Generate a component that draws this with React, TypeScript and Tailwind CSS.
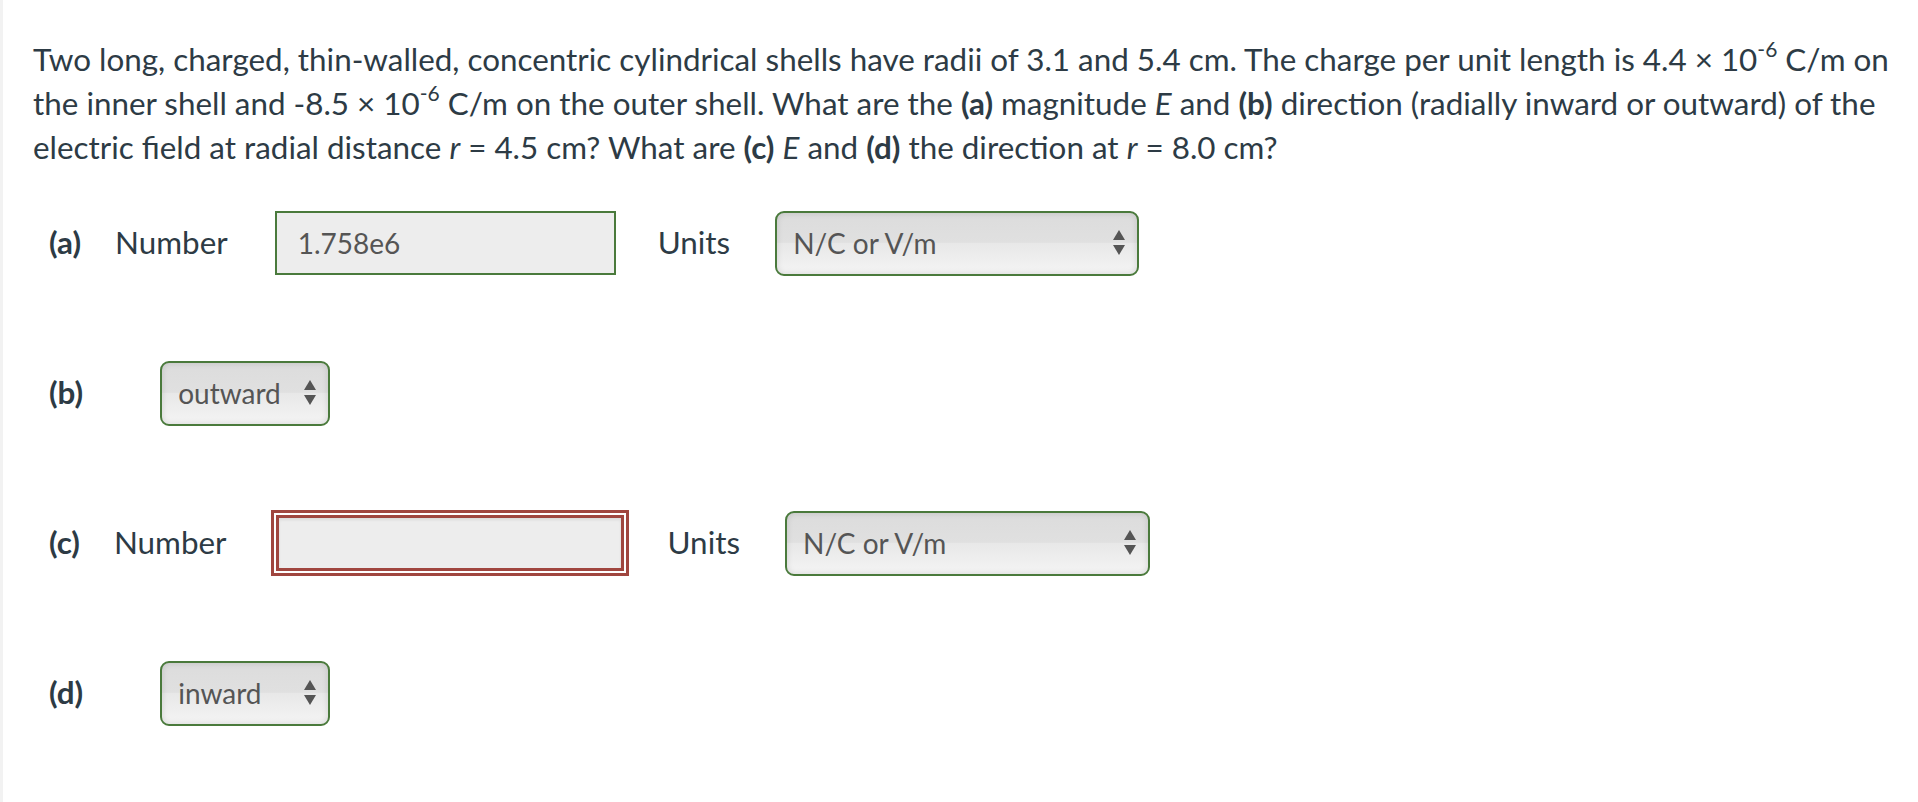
import React from 'react';

// Select arrows (up + down triangles)
const Arrows: React.FC = () => (
  <svg width="12" height="26" viewBox="0 0 12 26" className="shrink-0">
    <path d="M6 0 L12 10 L0 10 Z" fill="#555" />
    <path d="M0 15 L12 15 L6 25 Z" fill="#555" />
  </svg>
);

const selectBg =
  'bg-[linear-gradient(to_bottom,#dcdcdc_0%,#e0e0e0_48%,#e8e8e8_50%,#f4f4f4_100%)] shadow-[inset_0_0_6px_rgba(0,0,0,0.12)]';

const FakeSelect: React.FC<{ value: string; width: string }> = ({ value, width }) => (
  <div
    className={`${width} h-[65px] rounded-[9px] border-2 border-[#4a7a3c] ${selectBg} flex items-center justify-between pl-[16px] pr-[12px] text-[#555] text-[28px]`}
  >
    <span>{value}</span>
    <Arrows />
  </div>
);

const Label: React.FC<{ children: React.ReactNode }> = ({ children }) => (
  <span className="font-bold text-[#2d3b45]">{children}</span>
);

export default function App() {
  return (
    <div
      className="min-h-[802px] bg-white border-l-[3px] border-[#f2f2f2] pl-[30px] pt-[37px] text-[#2d3b45] text-[31.4px]"
      style={{ fontFamily: 'Lato, Roboto, "Noto Sans", sans-serif' }}
    >
      {/* Question */}
      <p className="leading-[44px] whitespace-nowrap">
        Two long, charged, thin-walled, concentric cylindrical shells have radii of 3.1 and 5.4 cm. The charge per unit length is 4.4 × 10
        <sup className="text-[21px] top-[-0.65em]">-6</sup> C/m on
        <br />
        the inner shell and -8.5 × 10<sup className="text-[21px] top-[-0.65em]">-6</sup> C/m on the outer shell. What are the{' '}
        <b>(a)</b> magnitude <i>E</i> and <b>(b)</b> direction (radially inward or outward) of the
        <br />
        electric field at radial distance <i>r</i> = 4.5 cm? What are <b>(c)</b> <i>E</i> and <b>(d)</b> the direction at{' '}
        <i>r</i> = 8.0 cm?
      </p>

      <div className="pl-[16px] mt-[41px] flex flex-col">
        {/* (a) */}
        <div className="flex items-center h-[66px]">
          <Label>(a)</Label>
          <span className="ml-[34px]">Number</span>
          <div className="ml-[47px] w-[341px] h-[64px] border-2 border-[#4a7a3c] bg-[#ededed] flex items-center pl-[21px] text-[28px] text-[#555]">
            1.758e6
          </div>
          <span className="ml-[42px]">Units</span>
          <div className="ml-[45px]">
            <FakeSelect value="N/C or V/m" width="w-[364px]" />
          </div>
        </div>

        {/* (b) */}
        <div className="flex items-center h-[66px] mt-[84px]">
          <Label>(b)</Label>
          <div className="ml-[77px]">
            <FakeSelect value="outward" width="w-[170px]" />
          </div>
        </div>

        {/* (c) */}
        <div className="flex items-center h-[66px] mt-[84px]">
          <Label>(c)</Label>
          <span className="ml-[34px]">Number</span>
          <div className="ml-[44px] w-[358px] h-[66px] border-[3px] border-[#a0463f] p-[2px] bg-white">
            <div className="w-full h-full border-[3px] border-[#a0463f] bg-[#ededed] shadow-[inset_0_2px_3px_rgba(0,0,0,0.08)]" />
          </div>
          <span className="ml-[39px]">Units</span>
          <div className="ml-[45px]">
            <FakeSelect value="N/C or V/m" width="w-[365px]" />
          </div>
        </div>

        {/* (d) */}
        <div className="flex items-center h-[66px] mt-[84px]">
          <Label>(d)</Label>
          <div className="ml-[77px]">
            <FakeSelect value="inward" width="w-[170px]" />
          </div>
        </div>
      </div>
    </div>
  );
}
